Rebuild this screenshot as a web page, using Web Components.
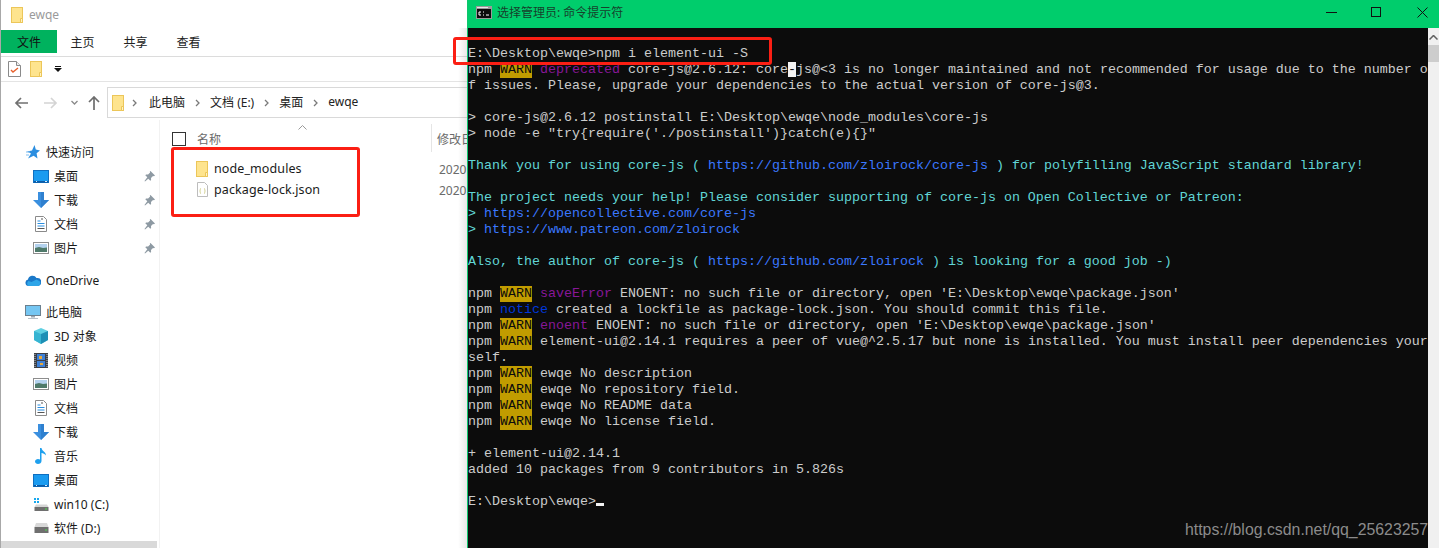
<!DOCTYPE html>
<html lang="zh">
<head>
<meta charset="utf-8">
<title>ewqe</title>
<style>
  html, body { margin: 0; height: 100%; background: #fff; overflow: hidden; }
  body { display: flex; width: 1439px; height: 548px; position: relative; }
</style>
</head>
<body>
<file-explorer></file-explorer>
<cmd-window></cmd-window>
<red-box style="left:171px;top:147px;width:189px;height:70px"></red-box>
<red-box style="left:453px;top:37px;width:319px;height:28px"></red-box>
<script>
// icon drawings shared by all the components
const ICONS = {
  folder: `<svg width="12" height="16" viewBox="0 0 12 16"><rect x=".5" y=".5" width="11" height="15" fill="#fee48e" stroke="#ecc659"/><path d="M9.5 11.5h2v4h-2z" fill="#fff3c4" stroke="#ecc659"/></svg>`,
  check: `<svg width="13" height="16" viewBox="0 0 13 16"><path d="M.5.5h8l4 4v11H.5z" fill="#fff" stroke="#8a8a8a"/><path d="M8.5.5v4h4" fill="#eee" stroke="#8a8a8a"/><path d="M3 9l2 2 5-4" fill="none" stroke="#e8602c" stroke-width="1.4"/></svg>`,
  drop: `<svg width="8" height="6" viewBox="0 0 8 6"><path d="M1 0h6v1H1zM0 2h8L4 6z" fill="#111"/></svg>`,
  back: `<svg width="14" height="12" viewBox="0 0 14 12"><path d="M7 1L2 6l5 5M2 6h12" fill="none" stroke="currentColor" stroke-width="1.7"/></svg>`,
  forward: `<svg width="14" height="12" viewBox="0 0 14 12"><path d="M7 1l5 5-5 5M12 6H0" fill="none" stroke="currentColor" stroke-width="1.7"/></svg>`,
  down: `<svg width="7" height="5" viewBox="0 0 7 5"><path d="M.5 1l3 3 3-3" fill="none" stroke="#8a8a8a" stroke-width="1.3"/></svg>`,
  up: `<svg width="12" height="14" viewBox="0 0 12 14"><path d="M1 6l5-5 5 5M6 1v13" fill="none" stroke="#6d6d6d" stroke-width="1.7"/></svg>`,
  sep: `<svg width="5" height="8" viewBox="0 0 5 8"><path d="M1 1l3 3-3 3" fill="none" stroke="#7a7a7a" stroke-width="1.3"/></svg>`,
  caret: `<svg width="9" height="5" viewBox="0 0 9 5"><path d="M.5 4.500l4-4 4 4" fill="none" stroke="#9a9a9a"/></svg>`,
  pin: `<svg width="11" height="11" viewBox="0 0 11 11"><path d="M6.500 0l4.500 4.500-1 .7-1-.3-2 2 .1 2-.8.8-2-2L1 10.500l-.5-.5 2.800-3.800-2-2 .8-.8 2 .1 2-2-.3-1z" fill="#8e9aa3"/></svg>`,
  star: `<svg width="14" height="14" viewBox="0 0 14 14"><path d="M8.500 0l1.300 4.600L14 5.500l-3.400 2.700.9 5.300-3.900-2.700L2 13.500l3-5L1 6.500l5-1z" fill="#2b8ee0"/><path d="M0 7h4M0 10h3" stroke="#7fbdf0"/></svg>`,
  desktop: `<svg width="16" height="13" viewBox="0 0 16 13"><rect x=".5" y=".5" width="15" height="12" fill="#1a9bf0" stroke="#0f6fc0"/><path d="M1 11h14v1.500H1z" fill="#0b5aa5"/><path d="M3 11.500h1M12 11.500h2" stroke="#d5ecff"/></svg>`,
  download: `<svg width="16" height="16" viewBox="0 0 16 16"><path d="M5 0h6v8h5l-8 8-8-8h5z" fill="#3a8fdf"/><path d="M8 0h3v8h5l-8 8z" fill="#2f80cf"/></svg>`,
  doc: `<svg width="12" height="16" viewBox="0 0 12 16"><path d="M.5.500h8l3 3v12H.5z" fill="#fff" stroke="#8a8a8a"/><path d="M2.500 5h3M2.500 7.500h7M2.500 10h7" stroke="#2b8ee0"/><path d="M2.500 12.500h7" stroke="#555"/><path d="M6 3h2" stroke="#555"/></svg>`,
  pic: `<svg width="16" height="12" viewBox="0 0 16 12"><rect x=".5" y=".5" width="15" height="11" fill="#fff" stroke="#8d8d8d"/><rect x="2" y="2" width="12" height="4" fill="#b4d2ee"/><path d="M2 6l4-1 4 1 4-.5V10H2z" fill="#4f7a6a"/></svg>`,
  cloud: `<svg width="16" height="11" viewBox="0 0 16 11"><path d="M3.500 11A3.300 3.300 0 0 1 3 4.500 4.600 4.600 0 0 1 11.500 3 3.700 3.700 0 0 1 13 11z" fill="#1a78c8"/><path d="M3.500 11a3 3 0 0 1 0-5l3 1 5-2.500 3.500 2A3.200 3.200 0 0 1 13 11z" fill="#2ea5e8"/></svg>`,
  pc: `<svg width="16" height="14" viewBox="0 0 16 14"><rect x=".5" y=".5" width="15" height="10" fill="#75c6f2" stroke="#6b7f8e"/><path d="M6 11h4v1.500H6z" fill="#9aa7b1"/><path d="M3 13h10v1H3z" fill="#b6c0c8"/></svg>`,
  cube: `<svg width="16" height="16" viewBox="0 0 16 16"><path d="M8 0l7 3v9l-7 4-7-4V3z" fill="#5fd0e2"/><path d="M8 6v10l-7-4V3z" fill="#36b4d2"/><path d="M8 6l7-3v9l-7 4z" fill="#1e8fb5"/></svg>`,
  film: `<svg width="14" height="15" viewBox="0 0 14 15"><rect width="14" height="15" fill="#3b3f46"/><rect x="3" y="1" width="8" height="6" fill="#3d80d6"/><rect x="3" y="8" width="8" height="6" fill="#3d80d6"/><path d="M5 3h3v3H5zM6 10h3v2H6z" fill="#e8a83a"/><path d="M1 1v13M13 1v13" stroke="#bfc4c9" stroke-dasharray="1 1"/></svg>`,
  music: `<svg width="12" height="16" viewBox="0 0 12 16"><path d="M5 0h1.500c.3 3 4.500 3.500 4.500 7.500-1-1.500-3-2.500-4.500-2.500v8c0 2-1.700 3-3.500 3C1.500 16 0 15 0 13.500S1.500 11 3 11c.8 0 1.500.2 2 .5z" fill="#1ea0ee"/></svg>`,
  winDrive: `<svg width="15" height="13" viewBox="0 0 15 13"><path d="M0 0h2v2H0zM3 0h2v2H3zM0 3h2v2H0zM3 3h2v2H3z" fill="#18a8ee"/><path d="M2 6.500h11l1.500 2.500H.5z" fill="#d5d5d5"/><rect x=".5" y="9" width="14" height="4" fill="#6f6f6f"/><rect x="11" y="10.500" width="2" height="1" fill="#4fe04f"/></svg>`,
  drive: `<svg width="15" height="10" viewBox="0 0 15 10"><path d="M2 0h11l1.500 4H.5z" fill="#d8d8d8"/><rect x=".5" y="4" width="14" height="6" fill="#6f6f6f"/><rect x="11" y="6.500" width="2" height="1" fill="#4fe04f"/></svg>`,
  json: `<svg width="11" height="15" viewBox="0 0 11 15"><path d="M.5.500h7l3 3v11H.5z" fill="#fff" stroke="#bdbdbd"/><path d="M4 6.500c-1 0-.6 1-.8 2-.1.500-.5.500-.5.500s.4 0 .5.500c.2 1-.2 2 .8 2M7 6.500c1 0 .6 1 .8 2 .1.500.5.500.5.500s-.4 0-.5.500c-.2 1 .2 2-.8 2" fill="none" stroke="#c9c77a" stroke-width=".8"/></svg>`,
  cmd: `<svg width="16" height="13" viewBox="0 0 16 13"><rect width="16" height="13" fill="#9a9a9a"/><rect x="1" y="3" width="14" height="9" fill="#0c0c0c"/><path d="M1 1h11v1H1z" fill="#e8e8e8"/><path d="M3 6h2M3 9h2M3 6v3M7 6h1M7 9h1M10 9h3" stroke="#fff"/></svg>`,
  min: `<svg width="11" height="1" viewBox="0 0 11 1"><path d="M0 .5h11" stroke="#111"/></svg>`,
  max: `<svg width="10" height="10" viewBox="0 0 10 10"><rect x=".5" y=".5" width="9" height="9" fill="none" stroke="#111"/></svg>`,
  close: `<svg width="11" height="11" viewBox="0 0 11 11"><path d="M.5.500l10 10M10.500.500l-10 10" stroke="#111"/></svg>`
};

class WinIcon extends HTMLElement {
  constructor() {
    super();
    this.attachShadow({ mode: 'open' });
    this.shadowRoot.innerHTML = `<style>:host{display:inline-flex;align-items:center;justify-content:center;line-height:0}</style>` + ICONS[this.getAttribute('name')];
  }
}
customElements.define('win-icon', WinIcon);

// red annotation drawn over the screenshot
class RedBox extends HTMLElement {
  constructor() {
    super();
    this.attachShadow({ mode: 'open' });
    this.shadowRoot.innerHTML = `<style>:host{position:absolute;box-sizing:border-box;border:3px solid #fb1f14;border-radius:3px}</style>`;
  }
}
customElements.define('red-box', RedBox);

const UI_FONT = `"Noto Sans","Noto Sans CJK SC",sans-serif`;

const ribbonTemplate = document.createElement('template');
ribbonTemplate.innerHTML = `
  <style>
    :host { display: block; font: 12px ${UI_FONT}; color: #222; }
    .title { height: 30px; display: flex; align-items: center; gap: 6px; padding: 0 0 1px 10px; box-sizing: border-box; color: #9a9a9a; }
    .tabs { height: 27px; display: flex; align-items: flex-start; border-bottom: 1px solid #dcdcdc; box-sizing: border-box; }
    .tabs span { width: 53px; height: 23px; line-height: 25px; text-align: center; }
    .tabs .file { width: 56px; background: #00b25e; color: #111; margin-right: -1px; }
    .qat { height: 25px; display: flex; align-items: center; padding-left: 7px; border-bottom: 1px solid #e4e4e4; box-sizing: border-box; }
    .qat win-icon:nth-child(2) { margin-left: 9px; }
    .qat win-icon:nth-child(3) { margin-left: 12px; }
    .nav { height: 38px; display: flex; align-items: flex-start; padding: 5px 0 0 13px; box-sizing: border-box; }
    .arrows { height: 31px; width: 93px; display: flex; align-items: center; flex: none; }
    .arrows win-icon:nth-child(1) { color: #707070; }
    .arrows win-icon:nth-child(2) { color: #d4d4d4; margin-left: 16px; }
    .arrows win-icon:nth-child(3) { margin-left: 13px; }
    .arrows win-icon:nth-child(4) { margin-left: 10px; }
    .addr { flex: 1; height: 31px; border: 1px solid #d9d9d9; border-right: 0; box-sizing: border-box; display: flex; align-items: center; padding-left: 4px; }
    .addr span { margin: 0 10px; padding-bottom: 2px; }
    .addr win-icon:nth-child(1) { margin-right: 8px; }
    .addr win-icon:nth-child(2) + span { margin-left: 12px; }
  </style>
  <div class="title"><win-icon name="folder"></win-icon><span>ewqe</span></div>
  <div class="tabs"><span class="file">文件</span><span>主页</span><span>共享</span><span>查看</span></div>
  <div class="qat"><win-icon name="check"></win-icon><win-icon name="folder"></win-icon><win-icon name="drop"></win-icon></div>
  <div class="nav">
    <div class="arrows"><win-icon name="back"></win-icon><win-icon name="forward"></win-icon><win-icon name="down"></win-icon><win-icon name="up"></win-icon></div>
    <div class="addr">
      <win-icon name="folder"></win-icon><win-icon name="sep"></win-icon><span>此电脑</span><win-icon name="sep"></win-icon><span>文档 (E:)</span><win-icon name="sep"></win-icon><span>桌面</span><win-icon name="sep"></win-icon><span>ewqe</span>
    </div>
  </div>
`;
class ExplorerRibbon extends HTMLElement {
  constructor() {
    super();
    this.attachShadow({ mode: 'open' });
    this.shadowRoot.appendChild(ribbonTemplate.content.cloneNode(true));
  }
}
customElements.define('explorer-ribbon', ExplorerRibbon);

// one row of the navigation tree, icon/pin come in as attributes
class NavItem extends HTMLElement {
  constructor() {
    super();
    this.attachShadow({ mode: 'open' });
    const pin = this.hasAttribute('pin') ? `<win-icon class="pin" name="pin"></win-icon>` : '';
    this.shadowRoot.innerHTML = `
      <style>
        :host { display: flex; align-items: center; height: 24px; padding-left: 32px; font: 12px ${UI_FONT}; color: #1a1a1a; position: relative; }
        :host([top]) { padding-left: 24px; }
        .box { width: 16px; margin-right: 5px; flex: none; display: flex; justify-content: center; }
        .pin { position: absolute; left: 143px; top: 7px; }
      </style>
      <span class="box"><win-icon name="${this.getAttribute('icon')}"></win-icon></span><slot></slot>${pin}`;
  }
}
customElements.define('nav-item', NavItem);

const treeTemplate = document.createElement('template');
treeTemplate.innerHTML = `
  <style>
    :host { display: block; width: 159px; flex: none; box-sizing: border-box; padding-top: 20px; border-right: 1px solid #f2f2f2; overflow: hidden; }
    .gap { height: 8px; }
    .sel { height: 7px; margin-top: 1px; width: 156px; background: #d9d9d9; }
  </style>
  <nav-item top icon="star">快速访问</nav-item>
  <nav-item pin icon="desktop">桌面</nav-item>
  <nav-item pin icon="download">下载</nav-item>
  <nav-item pin icon="doc">文档</nav-item>
  <nav-item pin icon="pic">图片</nav-item>
  <div class="gap"></div>
  <nav-item top icon="cloud">OneDrive</nav-item>
  <div class="gap"></div>
  <nav-item top icon="pc">此电脑</nav-item>
  <nav-item icon="cube">3D 对象</nav-item>
  <nav-item icon="film">视频</nav-item>
  <nav-item icon="pic">图片</nav-item>
  <nav-item icon="doc">文档</nav-item>
  <nav-item icon="download">下载</nav-item>
  <nav-item icon="music">音乐</nav-item>
  <nav-item icon="desktop">桌面</nav-item>
  <nav-item icon="winDrive">win10 (C:)</nav-item>
  <nav-item icon="drive">软件 (D:)</nav-item>
  <div class="sel"></div>
`;
class NavTree extends HTMLElement {
  constructor() {
    super();
    this.attachShadow({ mode: 'open' });
    this.shadowRoot.appendChild(treeTemplate.content.cloneNode(true));
  }
}
customElements.define('nav-tree', NavTree);

const filesTemplate = document.createElement('template');
filesTemplate.innerHTML = `
  <style>
    :host { display: block; flex: 1; font: 12px ${UI_FONT}; color: #1a1a1a; position: relative; overflow: hidden; }
    .head { height: 32px; display: flex; align-items: flex-end; color: #6b6b6b; box-sizing: border-box; padding-top: 4px; }
    .name { width: 272px; height: 100%; box-sizing: border-box; display: flex; align-items: center; padding: 1px 0 0 12px; border-right: 1px solid #e5e5e5; flex: none; }
    .box { width: 12px; height: 12px; border: 1px solid #333; margin-right: 11px; }
    .date { padding: 0 0 4px 5px; white-space: nowrap; }
    .caret { position: absolute; left: 138px; top: 5px; }
    .list { padding-top: 6px; }
    .row { display: flex; align-items: center; height: 21px; }
    .row .nm { width: 279px; flex: none; display: flex; align-items: center; padding-left: 36px; box-sizing: border-box; gap: 6px; font-size: 12.5px; letter-spacing: .1px; }
    .row win-icon { width: 12px; }
    .row .dt { color: #6b6b6b; padding-top: 1px; }
  </style>
  <div class="head">
    <div class="name"><span class="box"></span>名称</div>
    <div class="date">修改日</div>
  </div>
  <win-icon class="caret" name="caret"></win-icon>
  <div class="list">
    <div class="row"><div class="nm"><win-icon name="folder"></win-icon><span>node_modules</span></div><span class="dt">2020</span></div>
    <div class="row"><div class="nm"><win-icon name="json"></win-icon><span>package-lock.json</span></div><span class="dt">2020</span></div>
  </div>
`;
class FileList extends HTMLElement {
  constructor() {
    super();
    this.attachShadow({ mode: 'open' });
    this.shadowRoot.appendChild(filesTemplate.content.cloneNode(true));
  }
}
customElements.define('file-list', FileList);

const explorerTemplate = document.createElement('template');
explorerTemplate.innerHTML = `
  <style>
    :host { display: flex; flex-direction: column; width: 467px; height: 548px; flex: none; background: #fff; box-sizing: border-box; border-left: 1px solid #a8a8a8; position: relative; overflow: hidden; }
    .main { flex: 1; display: flex; min-height: 0; }
    .shade { position: absolute; right: 0; top: 28px; bottom: 0; width: 9px; background: linear-gradient(to right, rgba(0,0,0,0), rgba(0,0,0,.09)); }
  </style>
  <explorer-ribbon></explorer-ribbon>
  <div class="main"><nav-tree></nav-tree><file-list></file-list></div>
  <div class="shade"></div>
`;
class FileExplorer extends HTMLElement {
  constructor() {
    super();
    this.attachShadow({ mode: 'open' });
    this.shadowRoot.appendChild(explorerTemplate.content.cloneNode(true));
  }
}
customElements.define('file-explorer', FileExplorer);

const W = '<b>WARN</b>';
// one entry per console row, '' is an empty row
const CONSOLE_LINES = [
  `E:\\Desktop\\ewqe&gt;npm i element-ui -S`,
  `npm ${W} <span class="p">deprecated</span> core-js@2.6.12: core<span class="s">-</span>js@&lt;3 is no longer maintained and not recommended for usage due to the number o`,
  `f issues. Please, upgrade your dependencies to the actual version of core-js@3.`,
  ``,
  `&gt; core-js@2.6.12 postinstall E:\\Desktop\\ewqe\\node_modules\\core-js`,
  `&gt; node -e "try{require('./postinstall')}catch(e){}"`,
  ``,
  `<span class="c">Thank you for using core-js ( </span><span class="l">https://github.com/zloirock/core-js</span><span class="c"> ) for polyfilling JavaScript standard library!</span>`,
  ``,
  `<span class="c">The project needs your help! Please consider supporting of core-js on Open Collective or Patreon:</span>`,
  `<span class="c">&gt; </span><span class="l">https://opencollective.com/core-js</span>`,
  `<span class="c">&gt; </span><span class="l">https://www.patreon.com/zloirock</span>`,
  ``,
  `<span class="c">Also, the author of core-js ( </span><span class="l">https://github.com/zloirock</span><span class="c"> ) is looking for a good job -)</span>`,
  ``,
  `npm ${W} <span class="p">saveError</span> ENOENT: no such file or directory, open 'E:\\Desktop\\ewqe\\package.json'`,
  `npm <span class="n">notice</span> created a lockfile as package-lock.json. You should commit this file.`,
  `npm ${W} <span class="p">enoent</span> ENOENT: no such file or directory, open 'E:\\Desktop\\ewqe\\package.json'`,
  `npm ${W} element-ui@2.14.1 requires a peer of vue@^2.5.17 but none is installed. You must install peer dependencies your`,
  `self.`,
  `npm ${W} ewqe No description`,
  `npm ${W} ewqe No repository field.`,
  `npm ${W} ewqe No README data`,
  `npm ${W} ewqe No license field.`,
  ``,
  `+ element-ui@2.14.1`,
  `added 10 packages from 9 contributors in 5.826s`,
  ``,
  `E:\\Desktop\\ewqe&gt;<span class="cur"></span>`
];

const cmdTemplate = document.createElement('template');
cmdTemplate.innerHTML = `
  <style>
    :host { display: flex; flex-direction: column; flex: 1; height: 548px; min-width: 0; border-left: 1px solid #0fc56c; box-sizing: border-box; position: relative; }
    .bar { height: 28px; background: #00cd6c; display: flex; align-items: center; flex: none; box-sizing: border-box; padding: 0 0 4px 8px; font: 12px ${UI_FONT}; color: #17402b; }
    .bar .t { margin-left: 5px; flex: 1; }
    .bar win-icon { flex: none; }
    .ctl { display: flex; align-items: center; width: 113px; flex: none; }
    .ctl win-icon:nth-child(2) { margin-left: 34px; }
    .ctl win-icon:nth-child(3) { margin-left: 36px; }
    .body { flex: 1; display: flex; min-height: 0; }
    .out { flex: 1; padding-top: 18px; background: #0c0c0c; color: #cccccc; font: 13.333px/16px "Liberation Mono", monospace; overflow: hidden; }
    .row { height: 16px; white-space: pre; }
    b { font-weight: normal; background: #c19c00; color: #0c0c0c; display: inline-block; height: 16px; }
    .p { color: #881798; }
    .n { color: #0037da; }
    .c { color: #61d6d6; }
    .l { color: #3b78ff; }
    .s { background: #f2f2f2; color: #0c0c0c; }
    .cur { display: inline-block; width: 8px; height: 3px; background: #f2f2f2; vertical-align: -1px; }
    .scroll { width: 11px; flex: none; background: #f0f0f0; display: flex; flex-direction: column; align-items: center; }
    .scroll svg { margin-top: 7px; }
    .thumb { width: 100%; height: 17px; margin-top: 5px; background: #cdcdcd; }
    .mark { position: absolute; left: 717px; top: 520px; font: 15.85px/20px "Liberation Sans", sans-serif; color: #8b8b8b; white-space: nowrap; }
  </style>
  <div class="bar">
    <win-icon name="cmd"></win-icon><span class="t">选择管理员: 命令提示符</span>
    <div class="ctl"><win-icon name="min"></win-icon><win-icon name="max"></win-icon><win-icon name="close"></win-icon></div>
  </div>
  <div class="body">
    <div class="out"></div>
    <div class="scroll">
      <svg width="9" height="5" viewBox="0 0 9 5"><path d="M.5 4.500l4-4 4 4" fill="none" stroke="#606060" stroke-width="1.500"/></svg>
      <div class="thumb"></div>
    </div>
  </div>
  <span class="mark">https://blog.csdn.net/qq_25623257</span>
`;
class CmdWindow extends HTMLElement {
  constructor() {
    super();
    this.attachShadow({ mode: 'open' });
    this.shadowRoot.appendChild(cmdTemplate.content.cloneNode(true));
    this.shadowRoot.querySelector('.out').innerHTML = CONSOLE_LINES.map(l => `<div class="row">${l}</div>`).join('');
  }
}
customElements.define('cmd-window', CmdWindow);
</script>
</body>
</html>
